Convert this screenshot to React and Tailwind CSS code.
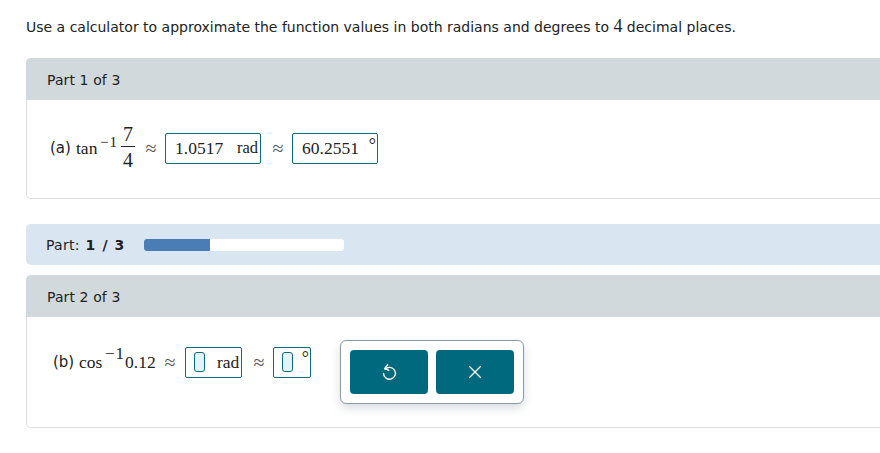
import React from "react";
import { X } from "lucide-react";

function Approx({ className = "" }) {
  return <span className={`w-[12px] text-center font-['Liberation_Serif',serif] text-[20px] leading-none text-[#555] ${className}`}>≈</span>;
}

function Card({ title, bodyClass, children }) {
  return (
    <section className="w-[870px]">
      <div className="flex h-[42px] items-center rounded-t-[5px] bg-[#d1d9dc] pl-[21px] pt-[2px] text-[14px] tracking-[0.1px] text-[#222]">{title}</div>
      <div className={`relative rounded-b-[5px] border border-t-0 border-[#dcdfe0] ${bodyClass}`}>{children}</div>
    </section>
  );
}

function Slot() {
  return <span className="block h-[20px] w-[11px] shrink-0 rounded-[3px] border border-[#0b6a7c] bg-[#e4f3f8]" />;
}

export default function App() {
  return (
    <div className="h-[453px] w-[880px] overflow-hidden bg-white pl-[26px] pt-[17px] font-['DejaVu_Sans',sans-serif] text-[#222]">
      <p className="h-[41px] whitespace-nowrap text-[14px] leading-[18px]">
        Use a calculator to approximate the function values in both radians and degrees to{" "}
        <span className="font-['Liberation_Serif',serif] text-[18px]">4</span> decimal places.
      </p>

      <Card title="Part 1 of 3" bodyClass="h-[99px] pl-[23px] pt-[25px]">
        <div className="flex h-[46px] items-center font-['Liberation_Serif',serif] text-[17.5px] text-[#222]">
          <span className="w-[21px] font-['DejaVu_Sans',sans-serif] text-[15px]">(a)</span>
          <span className="ml-[5px] w-[22px]">tan</span>
          <span className="ml-[2px] -mt-[12px] w-[20px] whitespace-nowrap text-[15px] tracking-[1px]">−1</span>
          <span className="ml-[1px] flex w-[14px] flex-col items-center text-[20px] leading-[20px]">
            <span className="h-[21px] leading-[19px]">7</span>
            <span className="h-px w-[14px] bg-[#222]" />
            <span className="h-[24px] leading-[26px]">4</span>
          </span>
          <Approx className="ml-[10px]" />
          <span className="ml-[8px] flex h-[31px] w-[96px] shrink-0 items-center whitespace-nowrap rounded-[2px] border border-[#0b6a7c] pl-[9px]">
            <span className="w-[49px]">1.0517</span>
            <span className="ml-[13px] text-[16.5px]">rad</span>
          </span>
          <Approx className="ml-[11px]" />
          <span className="relative ml-[8px] flex h-[31px] w-[86px] shrink-0 items-center rounded-[2px] border border-[#0b6a7c] pl-[9px]">
            60.2551
            <span className="absolute right-[1px] top-[-2px] text-[18px]">°</span>
          </span>
        </div>
      </Card>

      <div className="mt-[25px] flex h-[41px] w-[870px] items-center rounded-[5px] bg-[#d9e5f0] pl-[20px] pt-[1px] text-[14px]">
        <span className="w-[98px] whitespace-nowrap tracking-[0.3px]">Part: <b className="ml-[1px] tracking-[1.1px]">1 / 3</b></span>
        <div className="-mt-[1px] h-[12px] w-[200px] overflow-hidden rounded-[3px] bg-white">
          <div className="h-full w-[66px] bg-[#4a7db5]" />
        </div>
      </div>

      <div className="mt-[10px]">
        <Card title="Part 2 of 3" bodyClass="h-[111px] pl-[26px] pt-[22px]">
          <div className="flex h-[46px] items-center font-['Liberation_Serif',serif] text-[17.5px] text-[#222]">
            <span className="w-[22px] font-['DejaVu_Sans',sans-serif] text-[15px]">(b)</span>
            <span className="ml-[4px] w-[24px]">cos</span>
            <span className="ml-[2px] -mt-[16px] w-[20px] whitespace-nowrap text-[17px] tracking-[1px]">−1</span>
            <span className="w-[31px]">0.12</span>
            <Approx className="ml-[8px]" />
            <span className="ml-[9px] flex h-[31px] w-[57px] shrink-0 items-center rounded-[2px] border border-[#0b6a7c] pl-[8px]">
              <Slot />
              <span className="ml-[12px] text-[17.5px]">rad</span>
            </span>
            <Approx className="ml-[11px]" />
            <span className="relative ml-[8px] flex h-[31px] w-[38px] shrink-0 items-center rounded-[2px] border border-[#0b6a7c] pl-[8px]">
              <Slot />
              <span className="absolute right-[1px] top-[-3px] text-[18px]">°</span>
            </span>
          </div>
          <div className="absolute left-[313px] top-[23px] flex gap-[8px] rounded-[6px] border border-[#8a9ba5] bg-white p-[9px] shadow-[0_4px_10px_rgba(60,80,100,0.2)]">
            <button className="flex h-[44px] w-[78px] items-center justify-center rounded-[4px] bg-[#00697d] text-white">
              <svg width="19" height="19" viewBox="0 0 16 16" fill="none" stroke="currentColor" strokeWidth="1.15" strokeLinecap="round" strokeLinejoin="round">
                <path d="M4.3 5.3A5 5 0 1 1 3 8.8" />
                <path d="M6.5 1.5 4 4.6l3.4 1.7" />
              </svg>
            </button>
            <button className="flex h-[44px] w-[78px] items-center justify-center rounded-[4px] bg-[#00697d] text-white">
              <X size={22} strokeWidth={1.4} />
            </button>
          </div>
        </Card>
      </div>
    </div>
  );
}
